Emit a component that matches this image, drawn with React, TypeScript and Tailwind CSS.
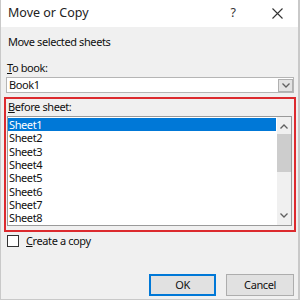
import React from "react";

const sheets = ["Sheet1", "Sheet2", "Sheet3", "Sheet4", "Sheet5", "Sheet6", "Sheet7", "Sheet8"];

function Chevron({ dir }: { dir: "up" | "down" }) {
  return (
    <svg width="8" height="5" viewBox="0 0 8 5" className="block">
      <path
        d={dir === "up" ? "M0.5 4.5 L4 1 L7.5 4.5" : "M0.5 0.5 L4 4 L7.5 0.5"}
        fill="none"
        stroke="#606060"
        strokeWidth="1.3"
      />
    </svg>
  );
}

export default function App() {
  return (
    <div className="w-[300px] h-[300px] flex flex-col bg-[#f0f0f0] border-l border-r-2 border-b border-[#c9c9c9] text-[11px] tracking-[-0.4px] text-[#111] font-['Segoe_UI','Noto_Sans',sans-serif] overflow-hidden">
      {/* Title bar */}
      <div className="h-[27px] shrink-0 bg-white flex items-center pl-[7px] pr-[15px] tracking-normal">
        <span className="text-[12.5px] text-[#222]">Move or Copy</span>
        <span className="ml-auto mr-[36px] text-[12.5px] text-[#333]">?</span>
        <svg width="11" height="11" viewBox="0 0 11 11">
          <path d="M0.5 0.5 L10.5 10.5 M10.5 0.5 L0.5 10.5" stroke="#333" strokeWidth="1.1" />
        </svg>
      </div>

      <div className="mt-[8px] pl-[7px] leading-[14px]">Move selected sheets</div>

      <div className="mt-[12px] pl-[6px] leading-[14px]">
        <u>T</u>o book:
      </div>

      {/* Combo box */}
      <div className="mt-[2px] ml-[5px] w-[288px] h-[16px] bg-white border border-[#b5b5b5] flex items-center">
        <span className="pl-[2px] flex-1 leading-[14px]">Book1</span>
        <div className="w-[15px] h-[13px] bg-[#e3e3e3] border border-[#b0b0b0] flex items-center justify-center">
          <Chevron dir="down" />
        </div>
      </div>

      {/* Highlighted group */}
      <div className="mt-[4px] ml-[3px] w-[292px] h-[135px] border-2 border-[#dc2a2e] flex flex-col">
        <div className="mt-[1px] pl-[2px] leading-[14px]">
          <u>B</u>efore sheet:
        </div>
        <div className="mt-[2px] ml-[1px] w-[285px] h-[110px] bg-white border border-[#9a9a9a] flex">
          <div className="flex-1 pt-[1px] pr-[1px]">
            {sheets.map((s, i) => (
              <div
                key={s}
                className={
                  i === 0
                    ? "h-[13.33px] leading-[13.33px] pl-[1px] bg-[#0078d7] text-white"
                    : "h-[13.33px] leading-[13.33px] pl-[1px]"
                }
              >
                {s}
              </div>
            ))}
          </div>
          <div className="w-[14px] bg-[#f0f0f0] flex flex-col items-center">
            <div className="h-[17px] w-full flex items-center justify-center pt-[1px]">
              <Chevron dir="up" />
            </div>
            <div className="w-full h-[38px] bg-[#cdcdcd]" />
            <div className="flex-1" />
            <div className="h-[17px] w-full flex items-center justify-center pb-[2px]">
              <Chevron dir="down" />
            </div>
          </div>
        </div>
      </div>

      {/* Checkbox */}
      <div className="mt-[3px] ml-[6px] flex items-center">
        <div className="w-[12px] h-[12px] bg-white border border-[#333]" />
        <span className="ml-[7px] leading-[12px]">
          <u>C</u>reate a copy
        </span>
      </div>

      {/* Buttons */}
      <div className="mt-auto mb-[3px] pr-[4px] flex justify-end gap-[10px]">
        <button className="w-[67px] h-[22px] bg-[#e1e1e1] border-2 border-[#0078d7] text-[11px]">OK</button>
        <button className="w-[68px] h-[22px] bg-[#e1e1e1] border border-[#adadad] text-[11px]">Cancel</button>
      </div>
    </div>
  );
}
